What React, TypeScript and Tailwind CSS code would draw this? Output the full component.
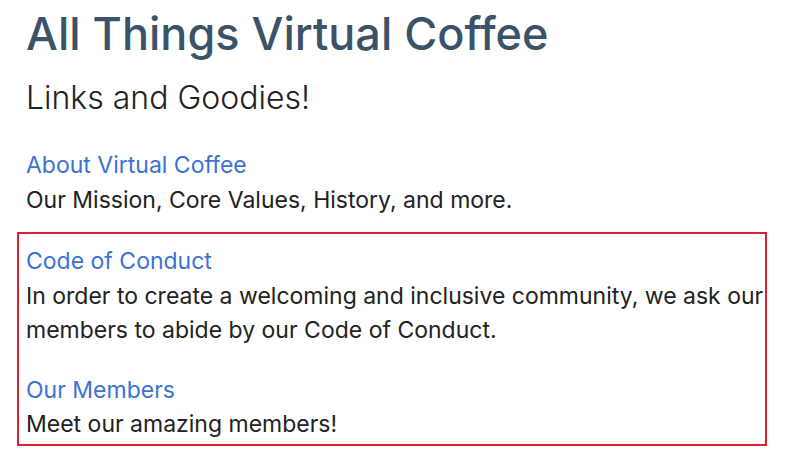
import React from 'react';

type Item = { title: string; text: string };

const items: Item[] = [
  { title: 'About Virtual Coffee', text: 'Our Mission, Core Values, History, and more.' },
  { title: 'Code of Conduct', text: 'In order to create a welcoming and inclusive community, we ask our members to abide by our Code of Conduct.' },
  { title: 'Our Members', text: 'Meet our amazing members!' },
];

const Entry: React.FC<{ item: Item; className?: string }> = ({ item, className = '' }) => (
  <div className={className}>
    <a href="#" className="block text-[23px] leading-[34.5px] text-[#3b72d4]">
      {item.title}
    </a>
    <p className="text-[23px] leading-[34.5px] text-[#222]">{item.text}</p>
  </div>
);

export default function App() {
  return (
    <div className="bg-white min-h-screen pl-[26px] pr-[18px] pt-[4px] font-['Inter',sans-serif]">
      <h1 className="text-[45px] leading-[60px] text-[#3b5369] font-medium">All Things Virtual Coffee</h1>
      <h2 className="mt-[14px] text-[32px] leading-[40px] font-light text-[#222]">Links and Goodies!</h2>
      <div className="mt-[30px]">
        <Entry item={items[0]} className="pb-[15px]" />
        {/* highlighted section */}
        <div className="-ml-[9px] border-2 border-[#d9232e] pl-[7px] pt-[10px] pb-[2px]">
          <Entry item={items[1]} className="pb-[25px]" />
          <Entry item={items[2]} />
        </div>
      </div>
    </div>
  );
}
